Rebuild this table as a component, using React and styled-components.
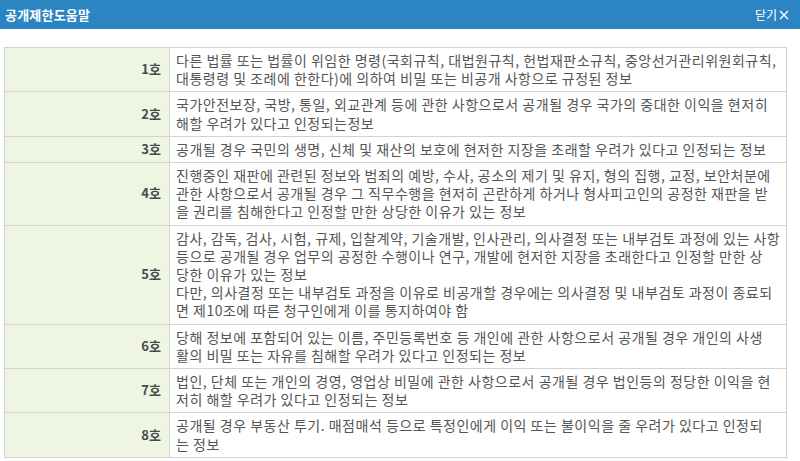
import React from 'react';
import styled, { createGlobalStyle } from 'styled-components';

const GlobalStyle = createGlobalStyle`
  html, body {
    margin: 0;
    padding: 0;
    background: #fff;
    overflow: hidden;
  }
  body {
    font-family: "Noto Sans CJK KR", "Noto Sans", sans-serif;
  }
`;

const Popup = styled.div`
  width: 800px;
  height: 461px;
  display: flex;
  flex-direction: column;
`;

const TitleBar = styled.div`
  height: 29px;
  background: #2c85c3;
  display: flex;
  align-items: center;
  justify-content: space-between;
  padding: 0 10px 0 5px;
  box-sizing: border-box;
  color: #fff;
`;

const Title = styled.h1`
  margin: 0;
  font-size: 13px;
  font-weight: 700;
  letter-spacing: 0.2px;
`;

const CloseButton = styled.button`
  display: flex;
  align-items: center;
  gap: 1px;
  background: none;
  border: none;
  padding: 0;
  color: #fff;
  font-family: inherit;
  font-size: 12px;
  cursor: pointer;
`;

const Body = styled.div`
  padding: 18px 13px 0 4px;
`;

const Table = styled.table`
  width: 100%;
  border-collapse: collapse;
  table-layout: fixed;
  line-height: 18.2px;
`;

const Label = styled.th`
  width: 156px;
  background: #eef5e2;
  border: 1px solid #d3d3d3;
  text-align: right;
  padding: 3px 8px 4px 0;
  color: #4a4a4a;
  font-size: 13px;
  font-weight: 700;
  vertical-align: middle;
`;

const Cell = styled.td`
  border: 1px solid #d3d3d3;
  padding: 3px 4px 4px 6px;
  color: #555;
  font-size: 14px;
  letter-spacing: 0.5px;
  white-space: nowrap;
`;

const rows = [
  ['1호', [
    '다른 법률 또는 법률이 위임한 명령(국회규칙, 대법원규칙, 헌법재판소규칙, 중앙선거관리위원회규칙,',
    '대통령령 및 조례에 한한다)에 의하여 비밀 또는 비공개 사항으로 규정된 정보',
  ]],
  ['2호', [
    '국가안전보장, 국방, 통일, 외교관계 등에 관한 사항으로서 공개될 경우 국가의 중대한 이익을 현저히',
    '해할 우려가 있다고 인정되는정보',
  ]],
  ['3호', [
    '공개될 경우 국민의 생명, 신체 및 재산의 보호에 현저한 지장을 초래할 우려가 있다고 인정되는 정보',
  ]],
  ['4호', [
    '진행중인 재판에 관련된 정보와 범죄의 예방, 수사, 공소의 제기 및 유지, 형의 집행, 교정, 보안처분에',
    '관한 사항으로서 공개될 경우 그 직무수행을 현저히 곤란하게 하거나 형사피고인의 공정한 재판을 받',
    '을 권리를 침해한다고 인정할 만한 상당한 이유가 있는 정보',
  ]],
  ['5호', [
    '감사, 감독, 검사, 시험, 규제, 입찰계약, 기술개발, 인사관리, 의사결정 또는 내부검토 과정에 있는 사항',
    '등으로 공개될 경우 업무의 공정한 수행이나 연구, 개발에 현저한 지장을 초래한다고 인정할 만한 상',
    '당한 이유가 있는 정보',
    '다만, 의사결정 또는 내부검토 과정을 이유로 비공개할 경우에는 의사결정 및 내부검토 과정이 종료되',
    '면 제10조에 따른 청구인에게 이를 통지하여야 함',
  ]],
  ['6호', [
    '당해 정보에 포함되어 있는 이름, 주민등록번호 등 개인에 관한 사항으로서 공개될 경우 개인의 사생',
    '활의 비밀 또는 자유를 침해할 우려가 있다고 인정되는 정보',
  ]],
  ['7호', [
    '법인, 단체 또는 개인의 경영, 영업상 비밀에 관한 사항으로서 공개될 경우 법인등의 정당한 이익을 현',
    '저히 해할 우려가 있다고 인정되는 정보',
  ]],
  ['8호', [
    '공개될 경우 부동산 투기. 매점매석 등으로 특정인에게 이익 또는 불이익을 줄 우려가 있다고 인정되',
    '는 정보',
  ]],
];

const CloseIcon = () => (
  <svg width="12" height="12" viewBox="0 0 12 12" aria-hidden="true">
    <path d="M2 2 L10 10 M10 2 L2 10" stroke="#fff" strokeWidth="1.4" fill="none" />
  </svg>
);

const App = () => (
  <>
    <GlobalStyle />
    <Popup>
      <TitleBar>
        <Title>공개제한도움말</Title>
        <CloseButton>
          닫기
          <CloseIcon />
        </CloseButton>
      </TitleBar>
      <Body>
        <Table>
          <tbody>
            {rows.map(([label, lines]) => (
              <tr key={label}>
                <Label>{label}</Label>
                <Cell>
                  {lines.map((line, i) => (
                    <React.Fragment key={i}>
                      {i > 0 && <br />}
                      {line}
                    </React.Fragment>
                  ))}
                </Cell>
              </tr>
            ))}
          </tbody>
        </Table>
      </Body>
    </Popup>
  </>
);

export default App;
